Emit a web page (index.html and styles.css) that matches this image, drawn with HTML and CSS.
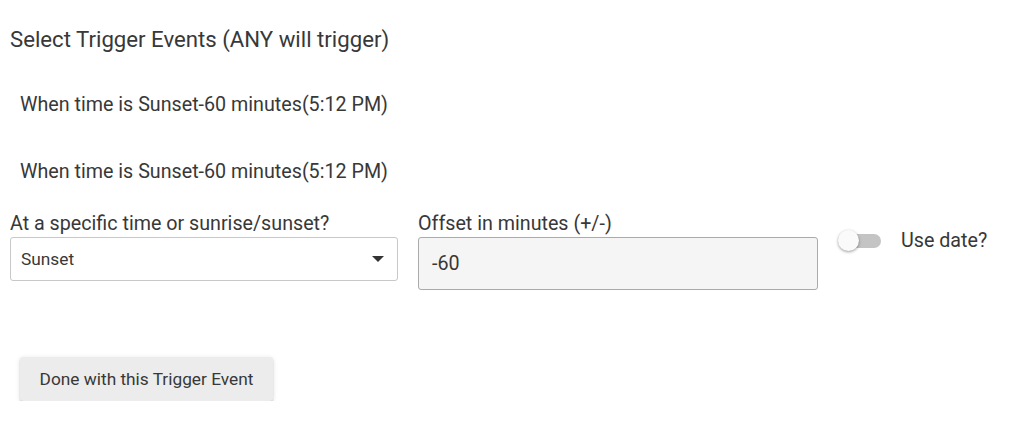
FILE: index.html
```html
<!DOCTYPE html>
<html>
<head>
<meta charset="utf-8">
<link rel="stylesheet" href="styles.css">
</head>
<body>
<div class="page">
  <h2 class="title">Select Trigger Events (ANY will trigger)</h2>
  <div class="event">When time is Sunset-60 minutes(5:12 PM)</div>
  <div class="event">When time is Sunset-60 minutes(5:12 PM)</div>
  <div class="fields">
    <div class="field field-select">
      <label class="label">At a specific time or sunrise/sunset?</label>
      <div class="select">
        <span>Sunset</span>
        <svg class="arrow" width="12" height="6" viewBox="0 0 12 6"><path d="M0 0 L12 0 L6 6 Z" fill="#333"/></svg>
      </div>
    </div>
    <div class="field field-input">
      <label class="label">Offset in minutes (+/-)</label>
      <div class="input">-60</div>
    </div>
    <div class="toggle-wrap">
      <div class="toggle"><span class="track"></span><span class="knob"></span></div>
      <span class="toggle-label">Use date?</span>
    </div>
  </div>
  <button class="btn">Done with this Trigger Event</button>
</div>
</body>
</html>
```

FILE: styles.css
```css
* { box-sizing: border-box; }
html, body { margin: 0; padding: 0; background: #fff; }
body { font-family: Roboto, "Noto Sans", sans-serif; color: #383838; }
.page { padding: 0 10px; }
.title { margin: 0; padding-top: 27px; font-size: 22.2px; font-weight: 400; line-height: 24px; }
.event { padding-left: 10px; font-size: 19.7px; line-height: 22px; margin-top: 43px; }
.event + .event { margin-top: 45px; }
.fields { display: flex; align-items: flex-start; margin-top: 30px; }
.label { display: block; font-size: 19.7px; line-height: 22px; margin-bottom: 2px; }
.field-select { width: 388px; }
.select { height: 44px; border: 1px solid #c8c8c8; border-radius: 3px; display: flex; align-items: center; justify-content: space-between; padding: 0 13px 0 10px; font-size: 17.3px; }
.arrow { display: block; }
.field-input { width: 400px; margin-left: 20px; }
.input { height: 53px; border: 1px solid #aaa; border-radius: 3px; background: #f5f5f5; display: flex; align-items: center; padding-left: 13px; font-size: 19.7px; }
.toggle-wrap { display: flex; align-items: center; margin-left: 20px; margin-top: 16px; }
.toggle { position: relative; width: 44px; height: 24px; }
.track { position: absolute; left: 4px; top: 5px; width: 39px; height: 14px; border-radius: 7px; background: #c4c4c4; }
.knob { position: absolute; left: 0; top: 1px; width: 21px; height: 21px; border-radius: 50%; background: #fafafa; box-shadow: 0 1px 3px rgba(0,0,0,0.4); }
.toggle-label { margin-left: 19px; font-size: 19.7px; margin-top: -2px; }
.btn { display: block; margin: 67px 0 0 10px; width: 253px; height: 44px; border: none; border-radius: 3px; background: #ececec; box-shadow: 0 2px 2px 0 rgba(0,0,0,.14), 0 3px 1px -2px rgba(0,0,0,.2), 0 1px 5px 0 rgba(0,0,0,.12); font-family: Roboto, sans-serif; font-size: 17.3px; color: #383838; padding: 0; }
```
